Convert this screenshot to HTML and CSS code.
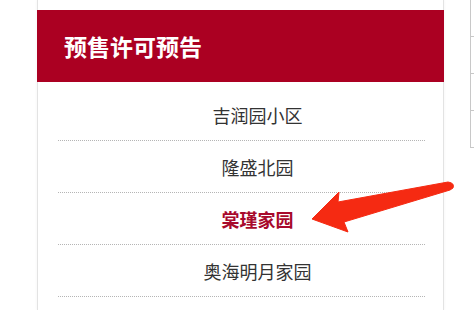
FILE: index.html
```
<!DOCTYPE html>
<html lang="zh-CN">
<head>
    <meta charset="UTF-8">
    <meta name="viewport" content="width=device-width, initial-scale=1.0">
    <link rel="stylesheet" href="styles.css">
</head>
<body>
    <div class="panel">
        <div class="panelHead">预售许可预告</div>
        <ul class="projList">
            <li class="projItem">吉润园小区</li>
            <li class="projItem">隆盛北园</li>
            <li class="projItem current">棠瑾家园</li>
            <li class="projItem">奥海明月家园</li>
        </ul>
    </div>
    <div class="sideBox">
        <div class="sideRow"></div>
        <div class="sideRow"></div>
        <div class="sideRow"></div>
        <div class="sideRow"></div>
    </div>
    <!-- 标注箭头 -->
    <svg class="markArrow" width="474" height="310" viewBox="0 0 474 310">
        <path d="M312 219 L339 192 L338 202 L448 182 Q455 183 453 188 L450 190 L344 222 L348 232 Z" fill="#f52a12" stroke="#f52a12" stroke-width="1" stroke-linejoin="round"/>
    </svg>
</body>
</html>
```
FILE: styles.css
```
html,body{
    margin: 0px;
    padding: 0px;
    width: 100%;
    height: 100%;
    background-color: #fff;
    font-family: "Noto Sans CJK SC", "Noto Sans", sans-serif;
    overflow: hidden;
}
body{
    display: flex;
    flex-direction: row;
    align-items: flex-start;
    position: relative;
}
.panel{
    flex-shrink: 0;
    margin-left: 37px;
    width: 407px;
    height: 100%;
    padding-top: 10px;
    box-sizing: border-box;
    border-left: 1px solid #e3e3e3;
    border-right: 1px solid #e3e3e3;
    box-shadow: 0px 0px 3px rgba(0,0,0,0.05);
}
.panelHead{
    height: 72px;
    margin: 0px -1px;
    padding-left: 27px;
    display: flex;
    align-items: center;
    background-color: #ab0022;
    color: #fff;
    font-size: 23px;
    font-weight: bold;
}
.projList{
    list-style: none;
    margin: 0px;
    padding: 7px 0px 0px 0px;
}
.projItem{
    height: 51px;
    margin: 0px 18px 0px 20px;
    padding-left: 32px;
    display: flex;
    align-items: center;
    justify-content: center;
    border-bottom: 1px dotted #b5b5b5;
    font-size: 18px;
    color: #333;
}
.current{
    color: #a80a2c;
    font-weight: bold;
}
.sideBox{
    flex-shrink: 0;
    margin-left: 26px;
    width: 10px;
    border-left: 1px solid #c8c8c8;
}
.sideRow{
    height: 36px;
    border-bottom: 1px solid #c8c8c8;
}
.markArrow{
    position: absolute;
    left: 0px;
    top: 0px;
}
```
